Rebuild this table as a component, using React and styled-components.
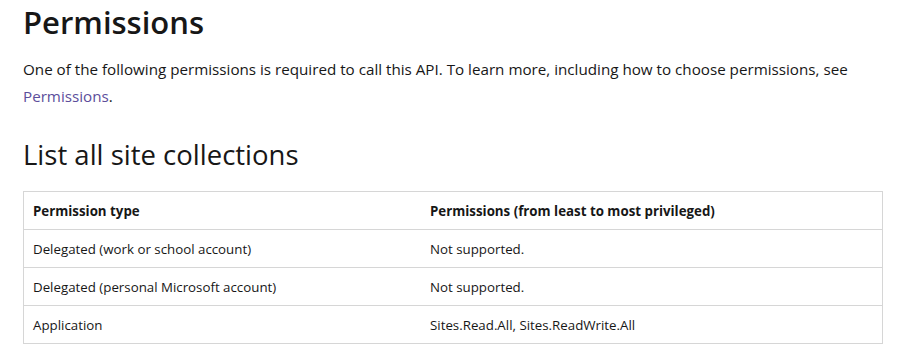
import React from 'react';
import styled, { createGlobalStyle } from 'styled-components';

const GlobalStyle = createGlobalStyle`
  body {
    margin: 0;
    background: #ffffff;
    color: #171717;
    font-family: "Open Sans", "Noto Sans", sans-serif;
  }
`;

const Page = styled.div`
  padding: 0 18px 0 23px;
`;

const Title = styled.h1`
  margin: 0;
  padding-top: 2px;
  font-size: 31px;
  font-weight: 600;
  line-height: 40px;
  color: #171717;
`;

const Intro = styled.p`
  margin: 14px 0 0;
  font-size: 15.2px;
  line-height: 27px;
  color: #171717;
`;

const DocLink = styled.a`
  color: #5c4e9b;
  text-decoration: none;
`;

const Subtitle = styled.h2`
  margin: 28px 0 0;
  font-size: 27.5px;
  font-weight: 400;
  line-height: 34px;
  color: #171717;
`;

const Table = styled.table`
  margin-top: 19px;
  width: 860px;
  border-collapse: collapse;
  border: 1px solid #d6d6d6;
  font-size: 13.3px;
`;

const HeadCell = styled.th`
  text-align: left;
  font-weight: 700;
  height: 37px;
  padding: 0 9px;
  border-bottom: 1px solid #d6d6d6;
  width: ${p => p.$width || 'auto'};
`;

const Cell = styled.td`
  height: 37px;
  padding: 0 9px;
  border-bottom: 1px solid #d6d6d6;
`;

const rows = [
  ['Delegated (work or school account)', 'Not supported.'],
  ['Delegated (personal Microsoft account)', 'Not supported.'],
  ['Application', 'Sites.Read.All, Sites.ReadWrite.All'],
];

export default function App() {
  return (
    <>
      <GlobalStyle />
      <Page>
        <Title>Permissions</Title>
        <Intro>
          One of the following permissions is required to call this API. To learn more, including how to choose permissions, see{' '}
          <DocLink href="#">Permissions</DocLink>.
        </Intro>
        <Subtitle>List all site collections</Subtitle>
        <Table>
          <thead>
            <tr>
              <HeadCell $width="379px">Permission type</HeadCell>
              <HeadCell>Permissions (from least to most privileged)</HeadCell>
            </tr>
          </thead>
          <tbody>
            {rows.map(([type, perms]) => (
              <tr key={type}>
                <Cell>{type}</Cell>
                <Cell>{perms}</Cell>
              </tr>
            ))}
          </tbody>
        </Table>
      </Page>
    </>
  );
}
